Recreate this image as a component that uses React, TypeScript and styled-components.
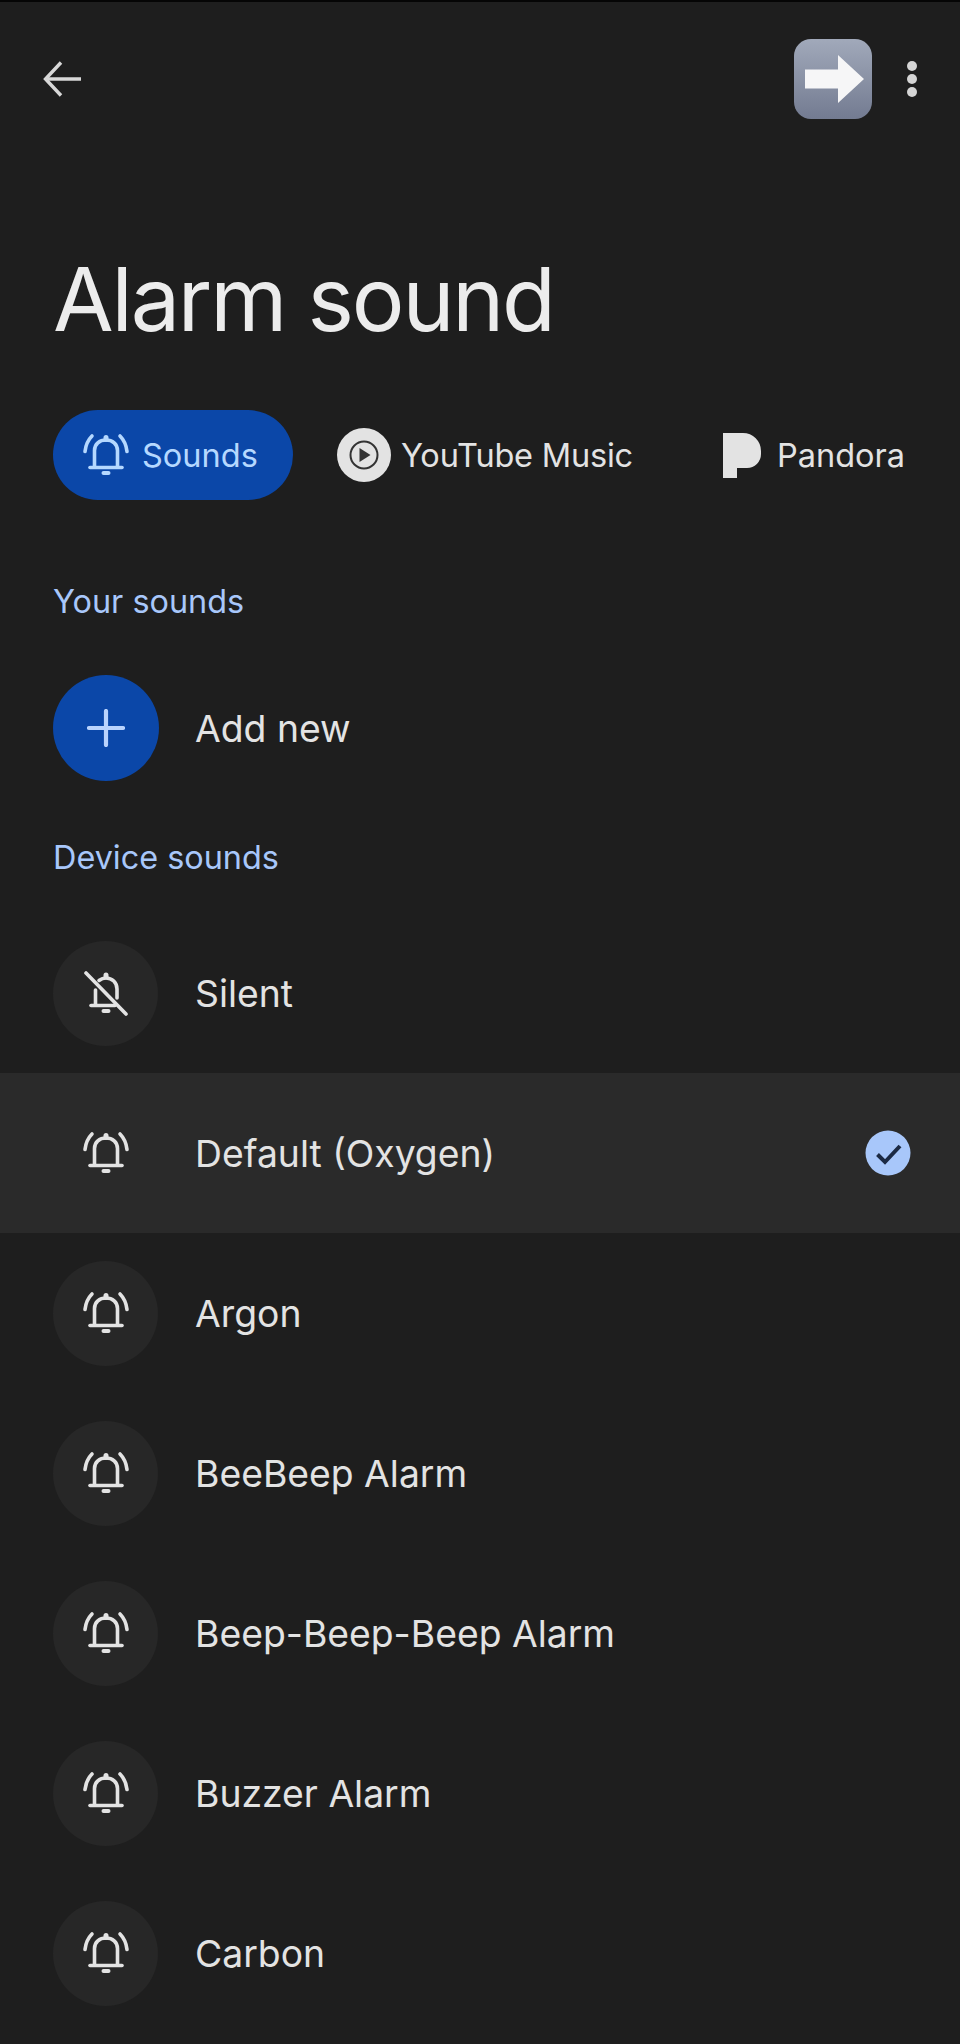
import React from 'react';
import styled, { createGlobalStyle } from 'styled-components';

const GlobalStyle = createGlobalStyle`
  html, body {
    margin: 0;
    padding: 0;
    background: #1e1e1e;
  }
  * {
    box-sizing: border-box;
  }
`;

const LIGHT = '#e3e3e3';
const BLUE = '#a8c7fa';
const BLUE_ACTIVE = '#b5d8ff';
const BLUE_DARK = '#0b47a8';

const SOUNDS = ['Argon', 'BeeBeep Alarm', 'Beep-Beep-Beep Alarm', 'Buzzer Alarm', 'Carbon'];

function BellIcon({ color = LIGHT }: { color?: string }) {
  return (
    <svg width='46' height='46' viewBox='0 0 46 46' fill='none' stroke={color} strokeWidth='3.6' strokeLinecap='round'>
      <path d='M11.5 35V18.5C11.5 12 16.5 8 23 8s11.5 4 11.5 10.5V35' />
      <path d='M7 35.5h32' />
      <path d='M23 5.5v2' strokeWidth='5' />
      <path d='M20.5 41h5' strokeWidth='4' />
      <path d='M2 19.5C2.7 13 5 8 9 4' />
      <path d='M44 19.5C43.3 13 41 8 37 4' />
    </svg>
  );
}

function BellOffIcon() {
  return (
    <svg width='46' height='46' viewBox='0 0 46 46' fill='none' stroke={LIGHT} strokeWidth='3.6' strokeLinecap='round'>
      <path d='M12.5 20v15' />
      <path d='M16 10.5C18 9 20.5 8 23 8c6 0 11 4.5 11 11v9' />
      <path d='M8 35.5h24' />
      <path d='M23 5v2' strokeWidth='5' />
      <path d='M20.5 41h5' strokeWidth='4' />
      <path d='M3 3l40 41' />
    </svg>
  );
}

function App() {
  return (
    <Screen>
      <GlobalStyle />
      <TopBar>
        <BackButton viewBox='0 0 38 36' fill='none' stroke='#d8d8d8' strokeWidth='3.4'>
          <path d='M38 18H3' />
          <path d='M18 1.5L2.5 18 18 34.5' />
        </BackButton>
        <TopActions>
          <EmojiTile>
            <svg width='60' height='50' viewBox='0 0 60 50'>
              <path d='M0 15.5h33V1l26 24-26 24V34.5H0z' fill='#f6f6f7' />
            </svg>
          </EmojiTile>
          <MoreDots>
            <Dot />
            <Dot />
            <Dot />
          </MoreDots>
        </TopActions>
      </TopBar>

      <Title>Alarm sound</Title>

      <Tabs>
        <ActiveTab>
          <BellIcon color={BLUE_ACTIVE} />
          <span>Sounds</span>
        </ActiveTab>
        <MusicTab>
          <svg width='54' height='54' viewBox='0 0 54 54'>
            <circle cx='27' cy='27' r='27' fill={LIGHT} />
            <circle cx='27' cy='27' r='13.5' fill='none' stroke='#333' strokeWidth='2' />
            <path d='M22.5 20v14l11-7z' fill='#333' />
          </svg>
          <span>YouTube Music</span>
        </MusicTab>
        <PandoraTab>
          <svg width='38' height='45' viewBox='0 0 38 45'>
            <path d='M0 0h20a18 18 0 0 1 18 18v3a14 14 0 0 1-14 14h-10v10H0z' fill={LIGHT} />
          </svg>
          <span>Pandora</span>
        </PandoraTab>
      </Tabs>

      <SectionLabel>Your sounds</SectionLabel>
      <AddRow>
        <AddCircle>
          <svg width='38' height='38' viewBox='0 0 38 38' stroke='#b9d3fd' strokeWidth='4.2' strokeLinecap='round'>
            <path d='M19 2v34M2 19h34' />
          </svg>
        </AddCircle>
        <RowLabel>Add new</RowLabel>
      </AddRow>
      <DeviceLabel>Device sounds</DeviceLabel>

      <SoundList>
        <SoundRow>
          <IconCircle>
            <BellOffIcon />
          </IconCircle>
          <RowLabel>Silent</RowLabel>
        </SoundRow>
        <SoundRow $selected>
          <IconCircle $selected>
            <BellIcon />
          </IconCircle>
          <RowLabel>Default (Oxygen)</RowLabel>
          <CheckMark>
            <svg width='46' height='46' viewBox='0 0 46 46'>
              <circle cx='23' cy='23' r='22.5' fill={BLUE} />
              <path d='M12.5 24.5l7.5 7.5 15-16' fill='none' stroke='#1c2a44' strokeWidth='4' />
            </svg>
          </CheckMark>
        </SoundRow>
        {SOUNDS.map((sound) => (
          <SoundRow key={sound}>
            <IconCircle>
              <BellIcon />
            </IconCircle>
            <RowLabel>{sound}</RowLabel>
          </SoundRow>
        ))}
      </SoundList>
    </Screen>
  );
}

const Screen = styled.div`
  width: 960px;
  height: 2044px;
  overflow: hidden;
  background: #1e1e1e;
  border-top: 2px solid #050505;
  color: ${LIGHT};
  font-family: Inter, 'Open Sans', sans-serif;
`;

const TopBar = styled.div`
  display: flex;
  justify-content: space-between;
  align-items: center;
  height: 80px;
  margin-top: 37px;
  padding: 0 43px;
`;

const BackButton = styled.svg`
  width: 38px;
  height: 36px;
`;

const TopActions = styled.div`
  display: flex;
  align-items: center;
  gap: 35px;
`;

const EmojiTile = styled.div`
  display: flex;
  align-items: center;
  justify-content: center;
  width: 78px;
  height: 80px;
  padding-left: 4px;
  border-radius: 17px;
  background: linear-gradient(#a1a9ba, #737b91);
`;

const MoreDots = styled.div`
  display: flex;
  flex-direction: column;
  gap: 3px;
`;

const Dot = styled.span`
  width: 10px;
  height: 10px;
  border-radius: 50%;
  background: #d5d5d5;
`;

const Title = styled.h1`
  margin: 141px 0 0 53px;
  height: 78px;
  font-size: 88px;
  line-height: 78px;
  font-weight: 400;
  letter-spacing: -2.2px;
  color: #ececec;
`;

const Tabs = styled.div`
  display: flex;
  align-items: center;
  height: 90px;
  margin-top: 72px;
  padding-left: 53px;
  font-size: 32.5px;
`;

const ActiveTab = styled.div`
  display: flex;
  align-items: center;
  gap: 13px;
  width: 240px;
  height: 90px;
  padding-left: 30px;
  border-radius: 45px;
  background: ${BLUE_DARK};
  color: ${BLUE_ACTIVE};
`;

const MusicTab = styled.div`
  display: flex;
  align-items: center;
  gap: 10px;
  margin-left: 44px;
  letter-spacing: -0.2px;
`;

const PandoraTab = styled.div`
  display: flex;
  align-items: center;
  gap: 16px;
  margin-left: 90px;
`;

const SectionLabel = styled.div`
  margin: 82px 0 0 53px;
  height: 40px;
  font-size: 32.4px;
  line-height: 40px;
  color: ${BLUE};
`;

const DeviceLabel = styled(SectionLabel)`
  margin-top: 57px;
`;

const AddRow = styled.div`
  display: flex;
  align-items: center;
  gap: 36px;
  margin-top: 53px;
  padding-left: 53px;
`;

const AddCircle = styled.div`
  display: flex;
  align-items: center;
  justify-content: center;
  width: 106px;
  height: 106px;
  border-radius: 50%;
  background: ${BLUE_DARK};
`;

const SoundList = styled.div`
  display: flex;
  flex-direction: column;
  margin-top: 35px;
`;

const SoundRow = styled.div<{ $selected?: boolean }>`
  display: flex;
  align-items: center;
  gap: 37px;
  height: 160px;
  padding: 0 49px 0 53px;
  background: ${(p) => (p.$selected ? '#2a2a2a' : 'transparent')};
`;

const IconCircle = styled.div<{ $selected?: boolean }>`
  display: flex;
  align-items: center;
  justify-content: center;
  width: 105px;
  height: 105px;
  flex-shrink: 0;
  border-radius: 50%;
  background: ${(p) => (p.$selected ? 'transparent' : '#272727')};
`;

const RowLabel = styled.span`
  font-size: 37.3px;
  color: ${LIGHT};
`;

const CheckMark = styled.div`
  display: flex;
  margin-left: auto;
`;

export default App;
